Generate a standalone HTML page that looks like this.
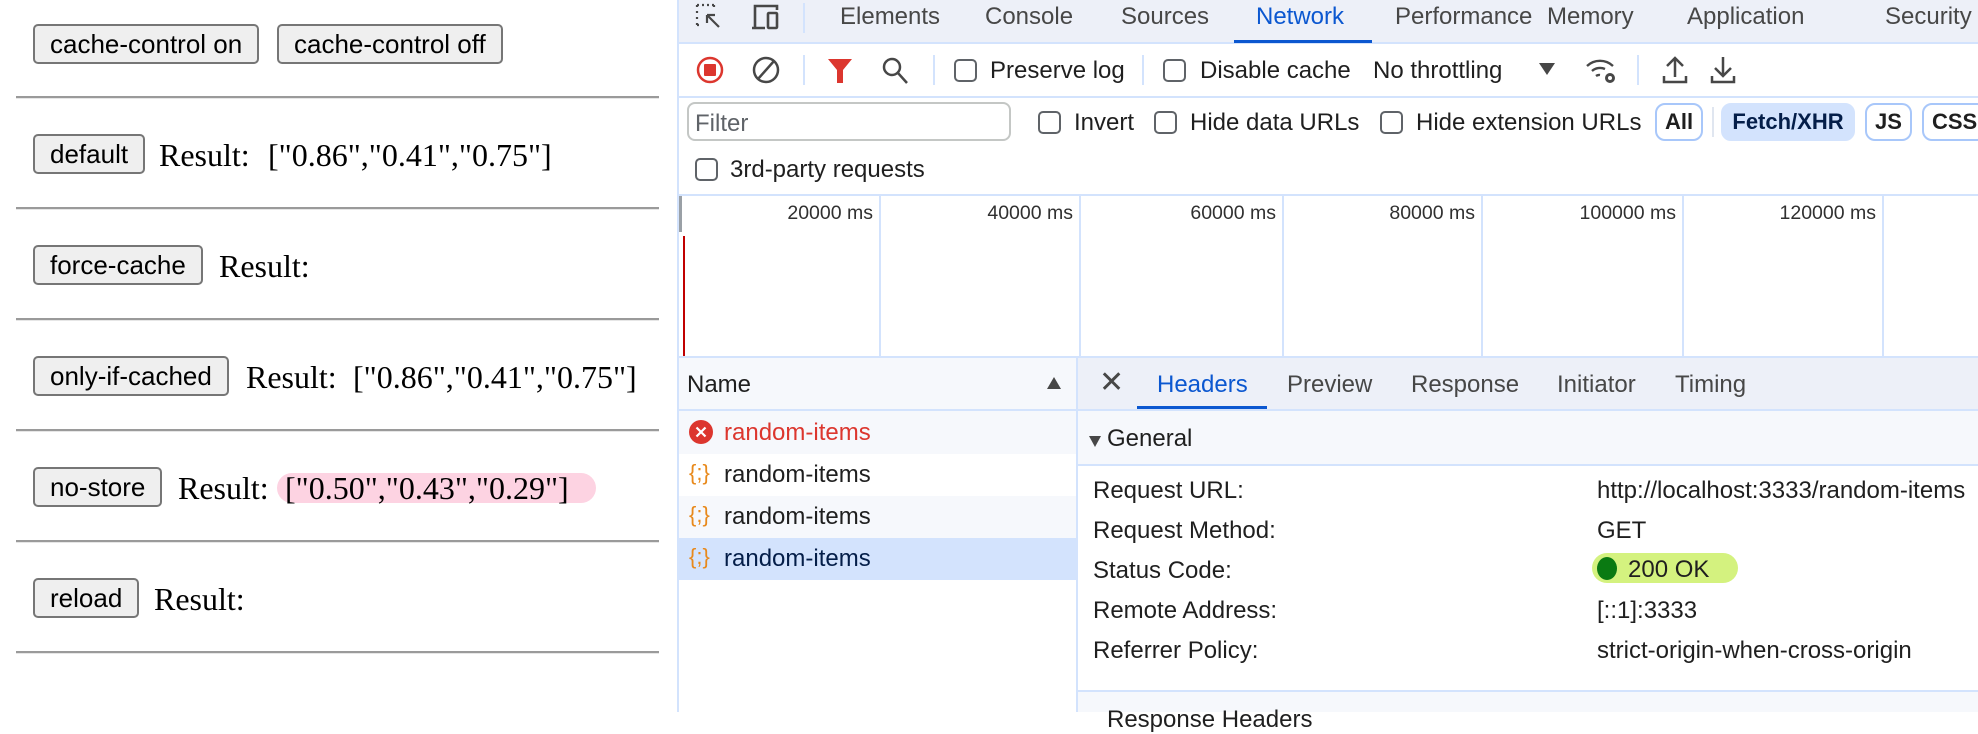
<!DOCTYPE html>
<html><head><meta charset="utf-8"><style>
*{margin:0;padding:0;box-sizing:border-box}
body{width:1978px;height:712px;overflow:hidden;background:#fff;position:relative;font-family:"Liberation Sans",sans-serif;}
.a{position:absolute;white-space:nowrap}
.btn{position:absolute;height:40px;border:2px solid #767676;border-radius:5px;background:#efefef;font-size:26px;line-height:36px;padding:0 15px;color:#000;white-space:nowrap}
.res{position:absolute;font-family:"Liberation Serif",serif;font-size:32px;line-height:32px;color:#000;white-space:nowrap}
.hr{position:absolute;left:16px;width:643px;height:3px;border-top:2px solid #9a9a9a;border-bottom:1px solid #e6e6e6}
.dt{font-size:24px;color:#1f1f1f;line-height:28px}
.cb{position:absolute;width:23px;height:23px;border:2px solid #5f6368;border-radius:5px;background:#fff}
.vl{position:absolute;width:2px;background:#d3e3fd}
.hl{position:absolute;height:2px;background:#d3e3fd}
.pill{position:absolute;height:38px;border:2px solid #a8c7fa;border-radius:10px;font-size:22px;line-height:34px;padding:0 8px;color:#1f1f1f;font-weight:bold}
.gl{position:absolute;top:196px;height:161px;width:2px;background:#d3e3fd}
.tl{position:absolute;top:202px;font-size:19.5px;color:#303030;text-align:right;width:120px}
.ji{position:absolute;font-size:22px;color:#e8891b}
</style></head><body>

<!-- left page -->
<div class="btn" style="left:33px;top:24px">cache-control on</div>
<div class="btn" style="left:277px;top:24px">cache-control off</div>
<div class="hr" style="top:96px"></div>

<div class="btn" style="left:33px;top:134px">default</div>
<div class="res" style="left:159px;top:139px">Result:</div>
<div class="res" style="left:268px;top:139px">["0.86","0.41","0.75"]</div>
<div class="hr" style="top:207px"></div>

<div class="btn" style="left:33px;top:245px">force-cache</div>
<div class="res" style="left:219px;top:250px">Result:</div>
<div class="hr" style="top:318px"></div>

<div class="btn" style="left:33px;top:356px">only-if-cached</div>
<div class="res" style="left:246px;top:361px">Result:</div>
<div class="res" style="left:353px;top:361px">["0.86","0.41","0.75"]</div>
<div class="hr" style="top:429px"></div>

<div class="btn" style="left:33px;top:467px">no-store</div>
<div class="res" style="left:178px;top:472px">Result:</div>
<div class="a" style="left:277px;top:473px;width:319px;height:30px;background:#fdd3e2;border-radius:15px"></div>
<div class="res" style="left:285px;top:472px">["0.50","0.43","0.29"]</div>
<div class="hr" style="top:540px"></div>

<div class="btn" style="left:33px;top:578px">reload</div>
<div class="res" style="left:154px;top:583px">Result:</div>
<div class="hr" style="top:651px"></div>

<!-- devtools -->
<div class="a" style="left:677px;top:0;width:1301px;height:712px;background:#fff;border-left:2px solid #d3e3fd"></div>
<div class="a" style="left:679px;top:0;width:1299px;height:43px;background:#edf0f8"></div>
<div class="hl" style="left:679px;top:42px;width:1299px"></div>
<svg class="a" style="left:695px;top:2px" width="30" height="30" viewBox="0 0 30 30" fill="none" stroke="#474747" stroke-width="2.2"><path d="M2 3h2M7 3h2M12 3h2M17 3h2M2 3v2M2 9v2M2 15v2M2 21v2M2 23h3M19 3v3" stroke-dasharray="2 2"/><path d="M12 13l12 12M12 13h8M12 13v8"/></svg>
<svg class="a" style="left:750px;top:3px" width="34" height="30" viewBox="0 0 34 30" fill="none" stroke="#474747" stroke-width="2.6"><path d="M5 24V3h22v4M2 25h13"/><rect x="18" y="10" width="9" height="15" rx="1"/></svg>
<div class="vl" style="left:803px;top:3px;height:30px"></div>
<div class="a dt" style="left:840px;top:3px;color:#474747">Elements</div>
<div class="a dt" style="left:985px;top:3px;color:#474747">Console</div>
<div class="a dt" style="left:1121px;top:3px;color:#474747">Sources</div>
<div class="a dt" style="left:1256px;top:3px;color:#0b57d0">Network</div>
<div class="a" style="left:1234px;top:40px;width:138px;height:3px;background:#0b57d0"></div>
<div class="a dt" style="left:1395px;top:3px;color:#474747">Performance</div>
<div class="a dt" style="left:1547px;top:3px;color:#474747">Memory</div>
<div class="a dt" style="left:1687px;top:3px;color:#474747">Application</div>
<div class="a dt" style="left:1885px;top:3px;color:#474747">Security</div>

<!-- toolbar -->
<svg class="a" style="left:695px;top:55px" width="30" height="30" viewBox="0 0 30 30"><circle cx="15" cy="15" r="12" fill="none" stroke="#dc362e" stroke-width="2.5"/><rect x="9" y="9" width="12" height="12" rx="1" fill="#dc362e"/></svg>
<svg class="a" style="left:751px;top:55px" width="30" height="30" viewBox="0 0 30 30" fill="none" stroke="#474747" stroke-width="2.5"><circle cx="15" cy="15" r="12"/><path d="M23 6L7 24"/></svg>
<div class="vl" style="left:803px;top:55px;height:30px"></div>
<svg class="a" style="left:826px;top:57px" width="28" height="28" viewBox="0 0 28 28"><path d="M2 2h24L17 13v13h-6V13z" fill="#dc362e"/></svg>
<svg class="a" style="left:880px;top:55px" width="30" height="30" viewBox="0 0 30 30" fill="none" stroke="#474747" stroke-width="2.5"><circle cx="12" cy="12" r="8"/><path d="M18 18l9 10"/></svg>
<div class="vl" style="left:933px;top:55px;height:30px"></div>
<div class="cb" style="left:954px;top:59px"></div>
<div class="a dt" style="left:990px;top:57px">Preserve log</div>
<div class="vl" style="left:1142px;top:55px;height:30px"></div>
<div class="cb" style="left:1163px;top:59px"></div>
<div class="a dt" style="left:1200px;top:57px">Disable cache</div>
<div class="a dt" style="left:1373px;top:57px">No throttling</div>
<svg class="a" style="left:1538px;top:62px" width="18" height="14" viewBox="0 0 18 14"><path d="M1 1h16L9 13z" fill="#474747"/></svg>
<svg class="a" style="left:1584px;top:55px" width="34" height="30" viewBox="0 0 34 30" fill="none" stroke="#474747" stroke-width="2.4"><path d="M3 11a19 19 0 0 1 26 0M8 16a12 12 0 0 1 13-2M12 21a5 5 0 0 1 4-1"/><circle cx="26" cy="23" r="3.5" stroke-width="3"/></svg>
<div class="vl" style="left:1637px;top:55px;height:30px"></div>
<svg class="a" style="left:1661px;top:55px" width="28" height="30" viewBox="0 0 28 30" fill="none" stroke="#474747" stroke-width="2.5"><path d="M14 22V3M6 11l8-8 8 8M3 21v6h22v-6"/></svg>
<svg class="a" style="left:1709px;top:55px" width="28" height="30" viewBox="0 0 28 30" fill="none" stroke="#474747" stroke-width="2.5"><path d="M14 2v19M6 13l8 8 8-8M3 21v6h22v-6"/></svg>
<div class="hl" style="left:679px;top:96px;width:1299px"></div>

<!-- filter row -->
<div class="a" style="left:687px;top:102px;width:324px;height:39px;border:2px solid #c4c7c5;border-radius:8px;background:#fff"></div>
<div class="a dt" style="left:695px;top:110px;color:#5f6368">Filter</div>
<div class="cb" style="left:1038px;top:111px"></div>
<div class="a dt" style="left:1074px;top:109px">Invert</div>
<div class="cb" style="left:1154px;top:111px"></div>
<div class="a dt" style="left:1190px;top:109px">Hide data URLs</div>
<div class="cb" style="left:1380px;top:111px"></div>
<div class="a dt" style="left:1416px;top:109px">Hide extension URLs</div>
<div class="pill" style="left:1655px;top:103px">All</div>
<div class="vl" style="left:1712px;top:107px;height:30px;background:#e0e6f0"></div>
<div class="pill" style="left:1721px;top:103px;width:134px;text-align:center;background:#d3e3fd;border-color:#d3e3fd;color:#041e49">Fetch/XHR</div>
<div class="pill" style="left:1865px;top:103px">JS</div>
<div class="pill" style="left:1922px;top:103px">CSS</div>
<div class="cb" style="left:695px;top:158px"></div>
<div class="a dt" style="left:730px;top:156px">3rd-party requests</div>
<div class="hl" style="left:679px;top:194px;width:1299px"></div>

<!-- timeline -->
<div class="gl" style="left:879px"></div>
<div class="gl" style="left:1079px"></div>
<div class="gl" style="left:1282px"></div>
<div class="gl" style="left:1481px"></div>
<div class="gl" style="left:1682px"></div>
<div class="gl" style="left:1882px"></div>
<div class="tl" style="left:753px">20000 ms</div>
<div class="tl" style="left:953px">40000 ms</div>
<div class="tl" style="left:1156px">60000 ms</div>
<div class="tl" style="left:1355px">80000 ms</div>
<div class="tl" style="left:1556px">100000 ms</div>
<div class="tl" style="left:1756px">120000 ms</div>
<div class="a" style="left:679px;top:196px;width:3px;height:36px;background:#9aa0a6"></div>
<div class="a" style="left:683px;top:236px;width:2px;height:121px;background:#c00000"></div>
<div class="hl" style="left:679px;top:356px;width:1299px"></div>

<!-- name panel -->
<div class="a" style="left:679px;top:358px;width:398px;height:52px;background:#f6f8fc"></div>
<div class="a dt" style="left:687px;top:371px">Name</div>
<svg class="a" style="left:1046px;top:376px" width="16" height="14" viewBox="0 0 16 14"><path d="M8 1l7 12H1z" fill="#474747"/></svg>
<div class="hl" style="left:679px;top:409px;width:398px"></div>
<div class="a" style="left:679px;top:411px;width:398px;height:43px;background:#f6f8fc"></div>
<div class="a" style="left:679px;top:496px;width:398px;height:42px;background:#f6f8fc"></div>
<div class="a" style="left:679px;top:538px;width:398px;height:42px;background:#d3e3fd"></div>
<svg class="a" style="left:689px;top:420px" width="24" height="24" viewBox="0 0 24 24"><circle cx="12" cy="12" r="12" fill="#dc362e"/><path d="M7.5 7.5l9 9M16.5 7.5l-9 9" stroke="#fff" stroke-width="2.2"/></svg>
<div class="a dt" style="left:724px;top:419px;color:#dc362e">random-items</div>
<div class="ji" style="left:689px;top:460px">{;}</div>
<div class="a dt" style="left:724px;top:461px">random-items</div>
<div class="ji" style="left:689px;top:502px">{;}</div>
<div class="a dt" style="left:724px;top:503px">random-items</div>
<div class="ji" style="left:689px;top:544px">{;}</div>
<div class="a dt" style="left:724px;top:545px;color:#041e49">random-items</div>
<div class="vl" style="left:1076px;top:357px;height:355px"></div>

<!-- details panel -->
<div class="a" style="left:1078px;top:358px;width:900px;height:52px;background:#edf0f8"></div>
<div class="a" style="left:1099px;top:367px;font-size:30px;color:#474747;line-height:32px">✕</div>
<div class="a dt" style="left:1157px;top:371px;color:#0b57d0">Headers</div>
<div class="a" style="left:1137px;top:406px;width:130px;height:4px;background:#0b57d0"></div>
<div class="a dt" style="left:1287px;top:371px;color:#474747">Preview</div>
<div class="a dt" style="left:1411px;top:371px;color:#474747">Response</div>
<div class="a dt" style="left:1557px;top:371px;color:#474747">Initiator</div>
<div class="a dt" style="left:1675px;top:371px;color:#474747">Timing</div>
<div class="hl" style="left:1078px;top:409px;width:900px"></div>
<div class="a" style="left:1078px;top:411px;width:900px;height:54px;background:#f6f8fc"></div>
<svg class="a" style="left:1088px;top:434px" width="14" height="14" viewBox="0 0 14 14"><path d="M1 2h12L7 13z" fill="#474747"/></svg>
<div class="a dt" style="left:1107px;top:425px">General</div>
<div class="hl" style="left:1078px;top:464px;width:900px"></div>
<div class="a dt" style="left:1093px;top:477px">Request URL:</div>
<div class="a dt" style="left:1597px;top:477px">http://localhost:3333/random-items</div>
<div class="a dt" style="left:1093px;top:517px">Request Method:</div>
<div class="a dt" style="left:1597px;top:517px">GET</div>
<div class="a dt" style="left:1093px;top:557px">Status Code:</div>
<div class="a" style="left:1592px;top:553px;width:146px;height:30px;border-radius:15px;background:#d4f27f"></div>
<div class="a" style="left:1597px;top:557px;width:20px;height:23px;border-radius:50%;background:#0a7a12"></div>
<div class="a dt" style="left:1628px;top:556px">200 OK</div>
<div class="a dt" style="left:1093px;top:597px">Remote Address:</div>
<div class="a dt" style="left:1597px;top:597px">[::1]:3333</div>
<div class="a dt" style="left:1093px;top:637px">Referrer Policy:</div>
<div class="a dt" style="left:1597px;top:637px">strict-origin-when-cross-origin</div>
<div class="hl" style="left:1078px;top:690px;width:900px"></div>
<div class="a" style="left:1078px;top:692px;width:900px;height:20px;background:#f6f8fc"></div>
<div class="a dt" style="left:1107px;top:706px">Response Headers</div>
</body></html>
